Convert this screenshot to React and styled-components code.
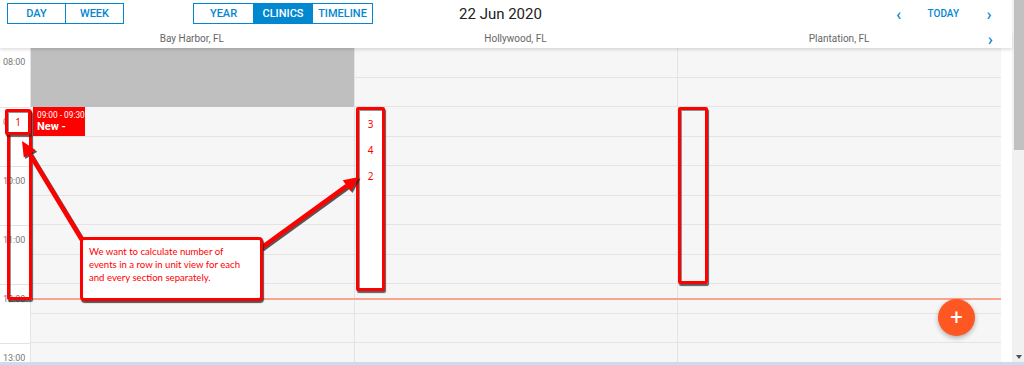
import React from "react";
import styled, { createGlobalStyle } from "styled-components";

const GlobalStyle = createGlobalStyle`
  html, body {
    margin: 0;
    padding: 0;
    background: #fff;
    font-family: Roboto, "Liberation Sans", sans-serif;
  }
  * { box-sizing: border-box; }
`;

const HOUR = 59;
const COLS = "30px repeat(3, 1fr) 11px";

const Page = styled.div`
  position: relative;
  width: 1024px;
  height: 365px;
  display: flex;
  flex-direction: column;
  overflow: hidden;
`;

const Frame = styled.div`
  display: flex;
  flex: 1;
  min-height: 0;
`;

const Main = styled.div`
  flex: 1;
  display: flex;
  flex-direction: column;
  min-width: 0;
`;

const Scrollbar = styled.div`
  width: 12px;
  background: #f1f1f1;
  display: flex;
  flex-direction: column;
  justify-content: space-between;
  align-items: center;
  padding-left: 1px;
`;

const Thumb = styled.div`
  width: 10px;
  height: 150px;
  background: #c1c1c1;
`;

const DownArrow = styled.div`
  width: 0;
  height: 0;
  border-left: 3px solid transparent;
  border-right: 3px solid transparent;
  border-top: 4px solid #505050;
  margin-bottom: 3px;
`;

const BottomLine = styled.div`
  height: 3px;
  background: #c9dcf2;
`;

const Toolbar = styled.div`
  height: 31px;
  display: grid;
  grid-template-columns: 1fr auto 1fr;
  align-items: center;
  padding: 0 18px 4px 7px;
`;

const Left = styled.div`
  display: flex;
  gap: 69px;
`;

const Group = styled.div`
  display: flex;
`;

const ModeButton = styled.div`
  width: ${({ w }) => w}px;
  height: 21px;
  display: flex;
  align-items: center;
  justify-content: center;
  border: 1px solid #0288d1;
  margin-left: -1px;
  font-size: 11px;
  font-weight: 500;
  color: ${({ active }) => (active ? "#fff" : "#0288d1")};
  background: ${({ active }) => (active ? "#0288d1" : "#fff")};
  &:first-child { margin-left: 0; }
`;

const DateLabel = styled.div`
  font-size: 15px;
  color: #222;
  padding-top: 1px;
`;

const Nav = styled.div`
  display: flex;
  justify-content: flex-end;
  align-items: center;
`;

const NavArrow = styled.span`
  color: #0288d1;
  font-size: 17px;
  font-weight: 500;
  width: 10px;
  text-align: center;
`;

const Today = styled.span`
  color: #0288d1;
  font-size: 10px;
  font-weight: 500;
  margin: 0 25px 0 24px;
`;

const Header = styled.div`
  height: 17px;
  display: grid;
  grid-template-columns: ${COLS};
  background: #fff;
  box-shadow: 0 2px 3px rgba(0, 0, 0, 0.12);
  position: relative;
  z-index: 2;
`;

const HeadCell = styled.div`
  position: relative;
  display: flex;
  align-items: center;
  justify-content: center;
  font-size: 10px;
  color: #666;
  padding-bottom: 2px;
`;

const HeadChevron = styled.span`
  position: absolute;
  right: 8px;
  top: -2px;
  color: #0288d1;
  font-size: 17px;
  font-weight: 500;
`;

const Body = styled.div`
  flex: 1;
  display: grid;
  grid-template-columns: ${COLS};
  overflow: hidden;
  position: relative;
`;

const TimeCol = styled.div`
  background: #fff;
`;

const HourLabel = styled.div`
  height: ${HOUR}px;
  border-top: 1px solid #e2e2e2;
  font-size: 9px;
  color: #777;
  padding: 9px 0 0 3px;
  &:first-child { border-top: none; }
`;

const Column = styled.div`
  position: relative;
  background: #f6f6f6;
  border-left: 1px solid #e4e4e4;
`;

const Slot = styled.div`
  height: ${HOUR / 2}px;
  border-bottom: 1px solid ${({ blocked }) => (blocked ? "#bfbfbf" : "#e4e4e4")};
  background: ${({ blocked }) => (blocked ? "#bfbfbf" : "transparent")};
`;

const Gutter = styled.div`
  background: #fff;
`;

const Event = styled.div`
  position: absolute;
  top: ${HOUR}px;
  left: 2px;
  width: 52px;
  height: 29px;
  background: #ff0000;
  color: #fff;
  padding: 3px 3px 0 4px;
  line-height: 1.25;
  white-space: nowrap;
  overflow: hidden;
`;

const EventTime = styled.div`
  font-size: 8.3px;
`;

const EventTitle = styled.div`
  font-size: 11px;
  font-weight: 700;
`;

const NowLine = styled.div`
  position: absolute;
  left: 30px;
  right: 11px;
  top: 250px;
  height: 2px;
  background: #f9a48e;
  z-index: 3;
`;

const Fab = styled.div`
  position: absolute;
  left: 938px;
  top: 299px;
  width: 37px;
  height: 37px;
  border-radius: 50%;
  background: #ff5722;
  color: #fff;
  font-size: 22px;
  display: flex;
  align-items: center;
  justify-content: center;
  box-shadow: 0 2px 5px rgba(0, 0, 0, 0.3);
  z-index: 4;
`;

/* annotation layer drawn over the screenshot */
const MarkBox = styled.div`
  position: absolute;
  left: ${({ x }) => x}px;
  top: ${({ y }) => y}px;
  width: ${({ w }) => w}px;
  height: ${({ h }) => h}px;
  border: 3px solid #ff0000;
  border-radius: 2px;
  background: ${({ fill }) => (fill ? "#fff" : "transparent")};
  box-shadow: 1px 2px 1px rgba(40, 40, 40, 0.75), inset 1px 1px 0 rgba(40, 40, 40, 0.5);
  color: #ff0000;
  font-family: "Noto Sans", "DejaVu Sans", sans-serif;
  font-size: 10px;
  z-index: 5;
`;

const Counts = styled.div`
  display: flex;
  flex-direction: column;
  align-items: center;
  gap: 12px;
  padding-top: 7px;
  line-height: 14px;
`;

const One = styled.div`
  display: flex;
  align-items: center;
  justify-content: center;
  height: 100%;
`;

const Callout = styled.div`
  position: absolute;
  left: 80px;
  top: 237px;
  width: 183px;
  height: 64px;
  border: 3px solid #ff0000;
  border-radius: 4px;
  background: #fff;
  box-shadow: 1px 2px 1px rgba(40, 40, 40, 0.8);
  color: #ff0000;
  font-family: Lato, "Noto Sans", sans-serif;
  font-size: 9.6px;
  line-height: 13px;
  white-space: nowrap;
  padding: 5px 0 0 6px;
  z-index: 6;
`;

const Arrows = styled.svg`
  position: absolute;
  left: 0;
  top: 0;
  z-index: 5;
  pointer-events: none;
`;

function Arrow({ x1, y1, x2, y2 }) {
  const a = Math.atan2(y2 - y1, x2 - x1);
  const len = 15;
  const wing = 7;
  const bx = x2 - len * Math.cos(a);
  const by = y2 - len * Math.sin(a);
  const px = -Math.sin(a) * wing;
  const py = Math.cos(a) * wing;
  const head = `${x2},${y2} ${bx + px},${by + py} ${bx - px},${by - py}`;
  return (
    <g>
      <g transform="translate(1.5,1.5)" opacity="0.75">
        <line x1={x1} y1={y1} x2={bx} y2={by} stroke="#222" strokeWidth="4.5" />
        <polygon points={head} fill="#222" />
      </g>
      <line x1={x1} y1={y1} x2={bx} y2={by} stroke="#ff0000" strokeWidth="4.5" />
      <polygon points={head} fill="#ff0000" />
    </g>
  );
}

const sections = ["Bay Harbor, FL", "Hollywood, FL", "Plantation, FL"];
const hours = ["08:00", "09:00", "10:00", "11:00", "12:00", "13:00"];

export default function App() {
  const slots = hours.length * 2;
  return (
    <Page>
      <GlobalStyle />
      <Frame>
        <Main>
          <Toolbar>
            <Left>
              <Group>
                <ModeButton w={59}>DAY</ModeButton>
                <ModeButton w={59}>WEEK</ModeButton>
              </Group>
              <Group>
                <ModeButton w={61}>YEAR</ModeButton>
                <ModeButton w={60} active>CLINICS</ModeButton>
                <ModeButton w={61}>TIMELINE</ModeButton>
              </Group>
            </Left>
            <DateLabel>22 Jun 2020</DateLabel>
            <Nav>
              <NavArrow>‹</NavArrow>
              <Today>TODAY</Today>
              <NavArrow>›</NavArrow>
            </Nav>
          </Toolbar>
          <Header>
            <div />
            {sections.map((s, i) => (
              <HeadCell key={s}>
                {s}
                {i === 2 && <HeadChevron>›</HeadChevron>}
              </HeadCell>
            ))}
            <div />
          </Header>
          <Body>
            <TimeCol>
              {hours.map((h) => (
                <HourLabel key={h}>{h}</HourLabel>
              ))}
            </TimeCol>
            {sections.map((s, i) => (
              <Column key={s}>
                {Array.from({ length: slots }).map((_, k) => (
                  <Slot key={k} blocked={i === 0 && k < 2} />
                ))}
                {i === 0 && (
                  <Event>
                    <EventTime>09:00 - 09:30</EventTime>
                    <EventTitle>New -</EventTitle>
                  </Event>
                )}
              </Column>
            ))}
            <Gutter />
            <NowLine />
          </Body>
        </Main>
        <Scrollbar>
          <Thumb />
          <DownArrow />
        </Scrollbar>
      </Frame>
      <BottomLine />

      <Fab>+</Fab>

      <MarkBox x={7} y={110} w={25} h={190} />
      <MarkBox x={5} y={109} w={26} h={26} fill>
        <One>1</One>
      </MarkBox>
      <MarkBox x={356} y={107} w={29} h={184} fill>
        <Counts>
          <span>3</span>
          <span>4</span>
          <span>2</span>
        </Counts>
      </MarkBox>
      <MarkBox x={678} y={107} w={30} h={177} />

      <Arrows width="1024" height="365">
        <Arrow x1={82} y1={240} x2={22} y2={141} />
        <Arrow x1={261} y1={248} x2={359} y2={177} />
      </Arrows>

      <Callout>
        We want to calculate number of
        <br />
        events in a row in unit view for each
        <br />
        and every section separately.
      </Callout>
    </Page>
  );
}
